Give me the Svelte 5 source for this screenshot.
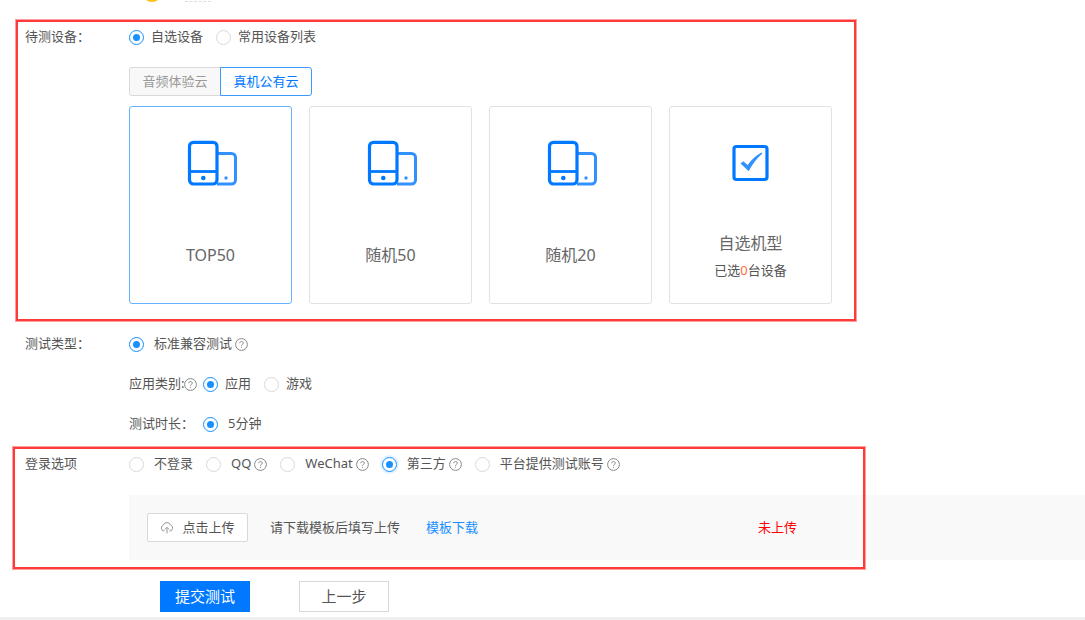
<script>
  const cards = [
    { id: 'top50', title: 'TOP50' },
    { id: 'random50', title: '随机50' },
    { id: 'random20', title: '随机20' },
    { id: 'custom', title: '自选机型' }
  ];

  const logins = [
    { id: 'none', text: '不登录', tip: false },
    { id: 'qq', text: 'QQ', tip: true },
    { id: 'wechat', text: 'WeChat', tip: true },
    { id: 'third', text: '第三方', tip: true },
    { id: 'platform', text: '平台提供测试账号', tip: true }
  ];

  let source = 'custom';
  let cloud = 'public';
  let card = 'top50';
  let category = 'app';
  let login = 'third';
  let selectedCount = 0;
</script>

{#snippet help()}
  <svg class="help" viewBox="0 0 13 13" aria-hidden="true">
    <circle cx="6.5" cy="6.5" r="5.9" />
    <path d="M4.7 5.2c0-2.2 3.6-2.2 3.6-.1 0 1.3-1.8 1.2-1.8 2.6M6.5 8.8v1" />
  </svg>
{/snippet}

<main>
  <div class="app-info">
    <span class="app-logo"></span>
    <span class="app-version"></span>
  </div>

  <form on:submit|preventDefault>
    <section class="row devices">
      <span class="name">待测设备：</span>
      <div class="content">
        <div class="options short">
          <label class="option">
            <input type="radio" name="source" value="custom" bind:group={source} />
            <span>自选设备</span>
          </label>
          <label class="option">
            <input type="radio" name="source" value="common" bind:group={source} />
            <span>常用设备列表</span>
          </label>
        </div>

        <div class="tabs">
          <button type="button" class:active={cloud === 'audio'} on:click={() => (cloud = 'audio')}>音频体验云</button>
          <button type="button" class:active={cloud === 'public'} on:click={() => (cloud = 'public')}>真机公有云</button>
        </div>

        <div class="cards">
          {#each cards as item}
            <button type="button" class="card" class:active={card === item.id} on:click={() => (card = item.id)}>
              {#if item.id === 'custom'}
                <svg class="picture" viewBox="0 0 52 48" aria-hidden="true">
                  <rect x="9" y="6.5" width="33" height="33" rx="2.5" stroke="#0078ff" stroke-width="3.2" />
                  <path class="tick" d="M15.500 23.500l2.800-2.200 4.400 3.600c3.600-5 8-9 13.800-12.300l.8.900C32.100 18 27.500 24 23.700 31.300z" />
                </svg>
              {:else}
                <svg class="picture" viewBox="-2 0 52 48" aria-hidden="true">
                  <path d="M30 13.500h14.500a4 4 0 0 1 4 4V40a4 4 0 0 1-4 4H30" stroke="#3391ff" stroke-width="3" />
                  <rect x="2.500" y="2.300" width="27.500" height="41.700" rx="4" stroke="#0078ff" stroke-width="3.200" />
                  <path d="M3 31.500h27" stroke="#0078ff" stroke-width="2.800" />
                  <circle cx="16.300" cy="38" r="2.300" fill="#0078ff" />
                  <circle cx="39" cy="38" r="1.700" fill="#3391ff" />
                </svg>
              {/if}
              <span class="caption">
                <span class="title">{item.title}</span>
                {#if item.id === 'custom'}
                  <span class="count">已选<em>{selectedCount}</em>台设备</span>
                {/if}
              </span>
            </button>
          {/each}
        </div>
      </div>
      <div class="mark"></div>
    </section>

    <section class="row">
      <span class="name">测试类型：</span>
      <div class="content">
        <div class="options">
          <label class="option wide">
            <input type="radio" name="type" checked />
            <span>标准兼容测试</span>
            {@render help()}
          </label>
        </div>
        <div class="options">
          <span class="sub-name"><span>应用类别:</span>{@render help()}</span>
          <label class="option">
            <input type="radio" name="category" value="app" bind:group={category} />
            <span>应用</span>
          </label>
          <label class="option">
            <input type="radio" name="category" value="game" bind:group={category} />
            <span>游戏</span>
          </label>
        </div>
        <div class="options">
          <span class="sub-name"><span>测试时长：</span></span>
          <label class="option wide">
            <input type="radio" name="duration" checked />
            <span>5分钟</span>
          </label>
        </div>
      </div>
    </section>

    <section class="row login">
      <span class="name">登录选项</span>
      <div class="content">
        <div class="options">
          {#each logins as item}
            <label class="option wide">
              <input type="radio" name="login" value={item.id} bind:group={login} />
              <span>{item.text}</span>
              {#if item.tip}{@render help()}{/if}
            </label>
          {/each}
        </div>
        <div class="upload">
          <button type="button" class="upload-button">
            <svg viewBox="0 0 14 14" aria-hidden="true">
              <path d="M4.5 11H4A3 3 0 0 1 3.3 5.2 3.9 3.9 0 0 1 10.7 5.200 3 3 0 0 1 10 11H9.500M7 13.500V7.500M4.800 9.500L7 7.300l2.200 2.200" />
            </svg>
            <span>点击上传</span>
          </button>
          <span class="hint">请下载模板后填写上传</span>
          <a href="#template">模板下载</a>
          <span class="status">未上传</span>
        </div>
      </div>
      <div class="mark"></div>
    </section>

    <div class="actions">
      <button type="submit" class="primary">提交测试</button>
      <button type="button">上一步</button>
    </div>
  </form>
</main>

<style>
  :global(body) {
    margin: 0;
    background: #f0f0f0;
  }
  main {
    background: #fff;
    padding-bottom: 5px;
    margin-bottom: 3px;
    color: #555;
    font: 13px/20px "Noto Sans", "Noto Sans CJK SC", sans-serif;
  }
  button {
    box-sizing: border-box;
    padding: 0 0 2px;
    border: 1px solid #d9d9d9;
    background: #fff;
    color: inherit;
    font: inherit;
    cursor: pointer;
  }
  .app-info {
    display: flex;
    align-items: flex-end;
    gap: 23px;
    height: 2px;
    margin-bottom: 20px;
    padding-left: 142px;
    overflow: hidden;
  }
  .app-logo {
    width: 20px;
    height: 20px;
    border-radius: 50%;
    background: #ffc010;
  }
  .app-version {
    width: 26px;
    height: 2px;
    border-bottom: 1px dashed #ddd;
  }
  .row {
    position: relative;
    display: grid;
    grid-template-columns: 104px 1fr;
    padding-left: 25px;
  }
  .devices {
    margin-bottom: 20px;
  }
  .name {
    line-height: 38px;
  }
  .devices .name {
    line-height: 28px;
  }
  .options {
    display: flex;
    align-items: center;
    gap: 13px;
    height: 40px;
  }
  .options.short {
    height: 30px;
  }
  .options label span,
  .sub-name span {
    padding-bottom: 2px;
  }
  .option {
    display: flex;
    align-items: center;
    gap: 7px;
  }
  .option.wide {
    gap: 10px;
  }
  .option :global(.help) {
    margin-left: -7px;
  }
  .sub-name {
    display: flex;
    align-items: center;
    width: 74px;
    margin-right: -13px;
  }
  input {
    appearance: none;
    box-sizing: border-box;
    display: grid;
    place-items: center;
    width: 15px;
    height: 15px;
    margin: 0;
    border: 1px solid #d9d9d9;
    border-radius: 50%;
    background: #fff;
  }
  input:checked {
    border-color: #1890ff;
  }
  input:checked::before {
    content: "";
    width: 7px;
    height: 7px;
    border-radius: 50%;
    background: #1890ff;
  }
  .login input:checked {
    box-shadow: 0 0 0 2px #e3f2ff;
  }
  .help {
    flex: none;
    width: 13px;
    height: 13px;
    fill: none;
    stroke: #888;
  }
  .tabs {
    display: flex;
    margin: 15px 0 10px;
  }
  .tabs button {
    width: 92px;
    height: 29px;
    border-radius: 3px 0 0 3px;
    background: #f8f8f8;
    color: #999;
  }
  .tabs button + button {
    margin-left: -1px;
    border-radius: 0 3px 3px 0;
  }
  .tabs .active {
    border-color: #3d9bff;
    background: #fff;
    color: #0078ff;
  }
  .cards {
    display: flex;
    gap: 17px;
  }
  .card {
    display: flex;
    flex-direction: column;
    align-items: center;
    width: 163px;
    height: 198px;
    padding-top: 33px;
    border-color: #e2e2e2;
    border-radius: 3px;
  }
  .card.active {
    border-color: #66b3ff;
  }
  .picture {
    width: 52px;
    height: 48px;
    fill: none;
    overflow: visible;
  }
  .tick {
    fill: #3391ff;
  }
  .caption {
    display: flex;
    flex-direction: column;
    justify-content: center;
    gap: 5px;
    height: 70px;
    margin-top: 32px;
  }
  .title {
    color: #666;
    font-size: 16px;
    line-height: 24px;
  }
  em {
    color: #ff6a3d;
    font-style: normal;
  }
  .mark {
    position: absolute;
    top: -2px;
    bottom: -17px;
    left: 16px;
    box-sizing: border-box;
    width: 840px;
    border: 2px solid #fd3b38;
    box-shadow: 0 0 0 1px #ff9e9c;
    pointer-events: none;
  }
  .login .mark {
    top: 3px;
    bottom: -9px;
    left: 13px;
    width: 852px;
  }
  .upload {
    display: flex;
    align-items: center;
    height: 65px;
    margin-top: 11px;
    padding-left: 18px;
    background: #f9f9f9;
  }
  .upload > span,
  .upload a {
    padding-bottom: 2px;
  }
  .upload-button {
    display: flex;
    align-items: center;
    justify-content: center;
    gap: 8px;
    width: 101px;
    height: 29px;
    border-radius: 2px;
  }
  .upload-button svg {
    width: 14px;
    height: 14px;
    fill: none;
    stroke: #999;
  }
  .hint {
    margin-left: 22px;
  }
  a {
    margin-left: 26px;
    color: #1890ff;
    text-decoration: none;
  }
  .status {
    margin-left: 280px;
    color: #f00;
  }
  .actions {
    display: flex;
    gap: 49px;
    margin-top: 21px;
    padding-left: 160px;
  }
  .actions button {
    width: 90px;
    height: 31px;
    font-size: 15px;
  }
  .actions .primary {
    border-color: #0078ff;
    background: #0078ff;
    color: #fff;
  }
</style>
